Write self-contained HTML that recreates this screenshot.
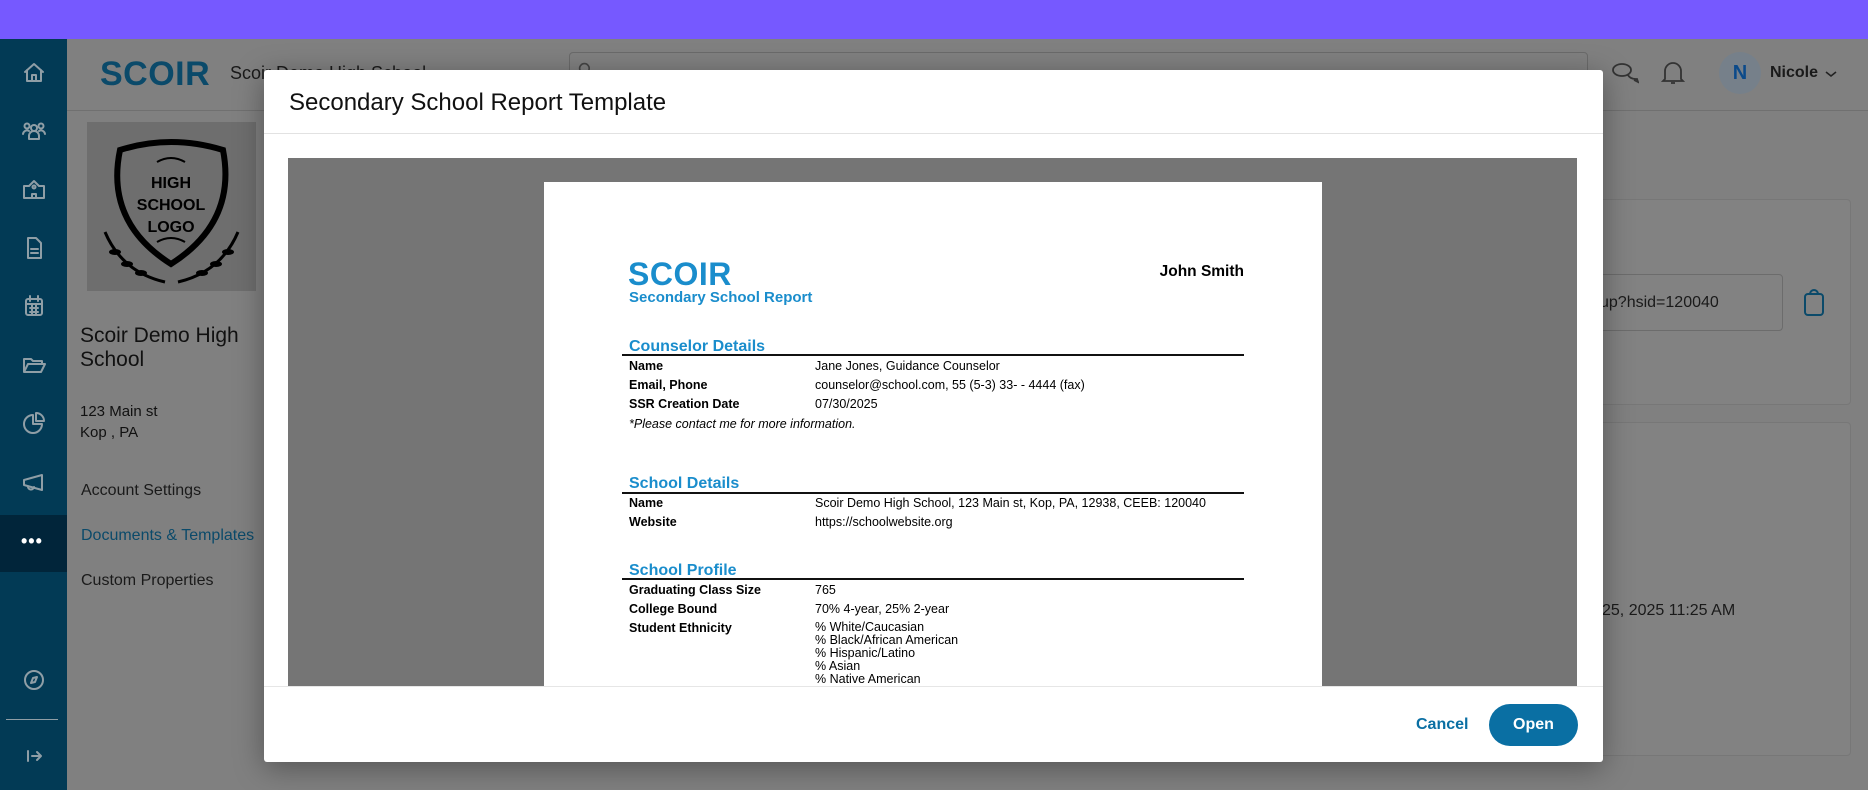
<!DOCTYPE html>
<html><head><meta charset="utf-8"><style>
*{margin:0;padding:0;box-sizing:border-box}
body{width:1868px;height:790px;overflow:hidden;background:#808080;font-family:"Liberation Sans",sans-serif;position:relative}
.a{position:absolute;white-space:nowrap}
.side{left:0;top:39px;width:67px;height:751px;background:#023a55}
.ic{position:absolute;left:21px;width:26px;height:26px}
.ic svg{width:26px;height:26px;fill:none;stroke:#8f9ea6;stroke-width:2;stroke-linecap:round;stroke-linejoin:round}
.pg{color:#000;font-size:13px}
.lb{position:absolute;left:85px;font-weight:bold;font-size:12.5px}
.vl{position:absolute;left:271px;font-size:12.5px}
.hd{position:absolute;left:85px;color:#1a8dcc;font-weight:bold;font-size:16px}
.rl{position:absolute;left:78px;width:622px;height:2px;background:#111}
</style></head><body>
<div class="a" style="left:0;top:0;width:1868px;height:39px;background:#7659ff"></div>
<div class="a side"></div>
<div class="a" style="left:0;top:515px;width:67px;height:57px;background:#01253a"></div>
<div class="a" style="left:6px;top:719px;width:52px;height:1px;background:#8f9ea6"></div>
<div class="ic" style="top:60px"><svg viewBox="0 0 26 26"><path d="M4 12L13 4l9 8M6 10v11h14V10M11 21v-6h4v6"/></svg></div>
<div class="ic" style="top:118px"><svg viewBox="0 0 26 26"><circle cx="13" cy="10" r="3"/><circle cx="6" cy="8" r="2.5"/><circle cx="20" cy="8" r="2.5"/><path d="M8 21v-3a5 5 0 0 1 10 0v3zM2 16a4 4 0 0 1 6-3M24 16a4 4 0 0 0-6-3"/></svg></div>
<div class="ic" style="top:176px"><svg viewBox="0 0 26 26"><path d="M3 22V10h5l5-5 5 5h5v12zM11 22v-4h4v4"/><circle cx="13" cy="11" r="1.5"/></svg></div>
<div class="ic" style="top:235px"><svg viewBox="0 0 26 26"><path d="M7 3h8l5 5v15H7zM10 14h7M10 18h7"/></svg></div>
<div class="ic" style="top:293px"><svg viewBox="0 0 26 26"><rect x="5" y="6" width="16" height="16" rx="2"/><path d="M9 3v5M17 3v5M5 11h16M9 15h8M9 19h8M11 11v11M15 11v11"/></svg></div>
<div class="ic" style="top:352px"><svg viewBox="0 0 26 26"><path d="M3 20V7h7l2 2h9v3M3 20l4-8h17l-4 8z"/></svg></div>
<div class="ic" style="top:410px"><svg viewBox="0 0 26 26"><path d="M12 5a9 9 0 1 0 9 9h-9zM15 3v8h8a8 8 0 0 0-8-8"/></svg></div>
<div class="ic" style="top:469px"><svg viewBox="0 0 26 26"><path d="M3 11v5l18 5V6zM7 17a3 3 0 0 0 6 1"/></svg></div>
<div class="a" style="left:21px;top:531px;color:#fff;font-size:18px;font-weight:bold;letter-spacing:1px">•••</div>
<div class="ic" style="top:667px"><svg viewBox="0 0 26 26"><circle cx="13" cy="13" r="9"/><path d="M16 10l-2 5-4 1 2-5z"/></svg></div>
<div class="ic" style="top:743px"><svg viewBox="0 0 26 26"><path d="M7 8v10M11 13h9M16 9l4 4-4 4"/></svg></div>

<!-- header -->
<div class="a" style="left:67px;top:110px;width:1801px;height:1px;background:#707070"></div>
<div class="a" style="left:100px;top:55px;font-size:34px;font-weight:bold;color:#0b4a6a;letter-spacing:0.5px">SCOIR</div>
<div class="a" style="left:230px;top:63px;font-size:18px;color:#1a1a1a">Scoir Demo High School</div>
<div class="a" style="left:569px;top:52px;width:1019px;height:38px;border:1px solid #6a6a6a;border-radius:4px"></div>
<div class="a" style="left:578px;top:62px;width:16px;height:16px"><svg width="16" height="16" viewBox="0 0 20 20" fill="none" stroke="#444" stroke-width="2"><circle cx="8" cy="8" r="6"/><path d="M12.5 12.5L18 18"/></svg></div>
<div class="a" style="left:1611px;top:60px;width:28px;height:26px"><svg width="28" height="26" viewBox="0 0 28 26" fill="none" stroke="#333" stroke-width="1.8"><ellipse cx="11" cy="10" rx="9" ry="6"/><path d="M17 14a8 5 0 0 0 9 5l1 3-4-2"/></svg></div>
<div class="a" style="left:1661px;top:59px;width:24px;height:28px"><svg width="24" height="28" viewBox="0 0 24 28" fill="none" stroke="#333" stroke-width="1.8"><path d="M4 20V12a8 8 0 0 1 16 0v8l2 2H2zM10 24h4"/></svg></div>
<div class="a" style="left:1719px;top:52px;width:42px;height:42px;border-radius:50%;background:#76808a;color:#0b4a8a;font-weight:bold;font-size:20px;text-align:center;line-height:42px">N</div>
<div class="a" style="left:1770px;top:64px;font-size:16px;font-weight:bold;color:#1a1a1a">Nicole</div>
<div class="a" style="left:1824px;top:66px;width:14px;height:10px"><svg width="14" height="10" viewBox="0 0 14 10" fill="none" stroke="#222" stroke-width="1.6"><path d="M2 3l5 4 5-4"/></svg></div>

<!-- left panel -->
<div class="a" style="left:87px;top:122px;width:169px;height:169px;background:#6e6e6e"><svg width="169" height="169" viewBox="0 0 169 169"><path d="M33 28Q84 12 136 28Q150 100 84 142Q18 100 33 28z" fill="none" stroke="#000" stroke-width="6"/><text x="84" y="66" text-anchor="middle" font-family="Liberation Sans" font-weight="bold" font-size="16">HIGH</text><text x="84" y="88" text-anchor="middle" font-family="Liberation Sans" font-weight="bold" font-size="16">SCHOOL</text><text x="84" y="110" text-anchor="middle" font-family="Liberation Sans" font-weight="bold" font-size="16">LOGO</text><path d="M70 40q14 -8 28 0M70 120q14 -8 28 0" stroke="#000" stroke-width="2" fill="none"/><path d="M18 110Q35 150 78 160M151 110Q134 150 91 160" fill="none" stroke="#000" stroke-width="3"/><g fill="#000"><ellipse cx="28" cy="130" rx="6" ry="3"/><ellipse cx="40" cy="142" rx="6" ry="3"/><ellipse cx="54" cy="151" rx="6" ry="3"/><ellipse cx="141" cy="130" rx="6" ry="3"/><ellipse cx="129" cy="142" rx="6" ry="3"/><ellipse cx="115" cy="151" rx="6" ry="3"/></g></svg></div>
<div class="a" style="left:80px;top:324px;font-size:21px;color:#111;line-height:24px;white-space:normal;width:180px">Scoir Demo High School</div>
<div class="a" style="left:80px;top:401px;font-size:15px;color:#111;line-height:21px">123 Main st<br>Kop , PA</div>
<div class="a" style="left:81px;top:482px;font-size:16px;color:#1a1a1a">Account Settings</div>
<div class="a" style="left:81px;top:527px;font-size:16px;color:#0b4a6a">Documents &amp; Templates</div>
<div class="a" style="left:81px;top:572px;font-size:16px;color:#1a1a1a">Custom Properties</div>

<!-- right cards -->
<div class="a" style="left:1560px;top:199px;width:291px;height:206px;border:1px solid #777;border-radius:4px;background:#828282"></div>
<div class="a" style="left:1560px;top:422px;width:291px;height:334px;border:1px solid #777;border-radius:4px;background:#828282"></div>
<div class="a" style="left:1560px;top:274px;width:223px;height:57px;border:1px solid #6c6c6c;border-radius:4px"></div>
<div class="a" style="left:1600px;top:294px;font-size:16px;color:#1a1a1a">up?hsid=120040</div>
<div class="a" style="left:1803px;top:289px;width:22px;height:28px"><svg width="22" height="28" viewBox="0 0 22 28" fill="none" stroke="#0b4a6a" stroke-width="2"><rect x="2" y="5" width="18" height="21" rx="3"/><path d="M7 5a4 4 0 0 1 8 0"/></svg></div>
<div class="a" style="left:1602px;top:602px;font-size:16px;color:#1a1a1a">25, 2025 11:25 AM</div>

<!-- modal -->
<div class="a" style="left:264px;top:70px;width:1339px;height:692px;background:#fff;border-radius:3px;box-shadow:0 6px 30px rgba(0,0,0,.35)"></div>
<div class="a" style="left:289px;top:89px;font-size:24px;color:#111">Secondary School Report Template</div>
<div class="a" style="left:264px;top:133px;width:1339px;height:1px;background:#e2e2e2"></div>
<div class="a" style="left:288px;top:158px;width:1289px;height:528px;background:#757575;overflow:hidden">
 <div class="pg" style="position:absolute;left:256px;top:24px;width:778px;height:520px;background:#fff">
  <div class="a" style="left:84px;top:74px;font-size:32px;font-weight:bold;color:#1a8dcc;letter-spacing:0.5px">SCOIR</div>
  <div class="a" style="left:85px;top:107px;font-size:15px;font-weight:bold;color:#1a8dcc">Secondary School Report</div>
  <div class="a" style="right:78px;top:81px;font-size:15.5px;font-weight:bold">John Smith</div>
  <div class="hd" style="top:156px">Counselor Details</div>
  <div class="rl" style="top:172px"></div>
  <div class="lb" style="top:177px">Name</div><div class="vl" style="top:177px">Jane Jones, Guidance Counselor</div>
  <div class="lb" style="top:196px">Email, Phone</div><div class="vl" style="top:196px">counselor@school.com, 55 (5-3) 33- - 4444 (fax)</div>
  <div class="lb" style="top:215px">SSR Creation Date</div><div class="vl" style="top:215px">07/30/2025</div>
  <div class="a" style="left:85px;top:235px;font-size:12.5px;font-style:italic">*Please contact me for more information.</div>
  <div class="hd" style="top:293px">School Details</div>
  <div class="rl" style="top:310px"></div>
  <div class="lb" style="top:314px">Name</div><div class="vl" style="top:314px">Scoir Demo High School, 123 Main st, Kop, PA, 12938, CEEB: 120040</div>
  <div class="lb" style="top:333px">Website</div><div class="vl" style="top:333px">https://schoolwebsite.org</div>
  <div class="hd" style="top:380px">School Profile</div>
  <div class="rl" style="top:396px"></div>
  <div class="lb" style="top:401px">Graduating Class Size</div><div class="vl" style="top:401px">765</div>
  <div class="lb" style="top:420px">College Bound</div><div class="vl" style="top:420px">70% 4-year, 25% 2-year</div>
  <div class="lb" style="top:439px">Student Ethnicity</div><div class="vl" style="top:439px;line-height:13px">% White/Caucasian<br>% Black/African American<br>% Hispanic/Latino<br>% Asian<br>% Native American</div>
 </div>
</div>
<div class="a" style="left:264px;top:686px;width:1339px;height:1px;background:#e6e6e6"></div>
<div class="a" style="left:1416px;top:716px;font-size:16px;font-weight:bold;color:#0a6fa3">Cancel</div>
<div class="a" style="left:1489px;top:704px;width:89px;height:42px;border-radius:21px;background:#0a6fa3;color:#fff;font-size:16px;font-weight:bold;text-align:center;line-height:42px">Open</div>
</body></html>
